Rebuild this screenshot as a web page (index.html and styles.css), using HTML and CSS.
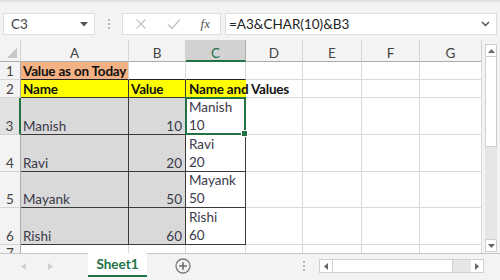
FILE: index.html
```html
<!DOCTYPE html>
<html>
<head>
<meta charset="utf-8">
<link rel="stylesheet" href="styles.css">
</head>
<body>
<div class="app">
  <div class="toolbar">
    <div class="namebox"><span>C3</span>
      <svg class="nb-arrow" width="8" height="5" viewBox="0 0 8 5"><polygon points="0,0 8,0 4,4.5" fill="#555"/></svg>
    </div>
    <div class="grip"><i></i><i></i><i></i></div>
    <div class="fxbox">
      <svg width="12" height="12" viewBox="0 0 12 12"><path d="M1.5 1.5 L10.5 10.5 M10.5 1.5 L1.5 10.5" stroke="#c4c4c4" stroke-width="1.3" fill="none"/></svg>
      <svg width="14" height="12" viewBox="0 0 14 12"><path d="M1 6.5 L5 10.5 L13 1.5" stroke="#c4c4c4" stroke-width="1.4" fill="none"/></svg>
      <span class="fx">fx</span>
    </div>
    <div class="formula"><span>=A3&amp;CHAR(10)&amp;B3</span>
      <svg width="9" height="6" viewBox="0 0 9 6"><path d="M1 1 L4.5 4.5 L8 1" stroke="#555" stroke-width="1.5" fill="none"/></svg>
    </div>
  </div>

  <div class="sheet">
    <div class="grid">
      <div class="corner"><svg width="10" height="10" viewBox="0 0 10 10"><polygon points="10,0 10,10 0,10" fill="#c6c6c6"/></svg></div>
      <div class="ch">A</div><div class="ch">B</div><div class="ch sel">C</div><div class="ch">D</div><div class="ch">E</div><div class="ch">F</div><div class="ch">G</div>

      <div class="rh">1</div>
      <div class="c orange b bb">Value as on Today</div><div class="c bb"></div><div class="c bb"></div><div class="c"></div><div class="c"></div><div class="c"></div><div class="c"></div>

      <div class="rh">2</div>
      <div class="c yellow b t">Name</div><div class="c yellow b t">Value</div><div class="c yellow b over">Name and Values</div><div class="c clear"></div><div class="c"></div><div class="c"></div><div class="c"></div>

      <div class="rh rsel">3</div>
      <div class="c gray t">Manish</div><div class="c gray t num">10</div><div class="c t wrap active"><span>Manish</span><span>10</span></div><div class="c"></div><div class="c"></div><div class="c"></div><div class="c"></div>

      <div class="rh">4</div>
      <div class="c gray t">Ravi</div><div class="c gray t num">20</div><div class="c t wrap"><span>Ravi</span><span>20</span></div><div class="c"></div><div class="c"></div><div class="c"></div><div class="c"></div>

      <div class="rh">5</div>
      <div class="c gray t">Mayank</div><div class="c gray t num">50</div><div class="c t wrap"><span>Mayank</span><span>50</span></div><div class="c"></div><div class="c"></div><div class="c"></div><div class="c"></div>

      <div class="rh">6</div>
      <div class="c gray t">Rishi</div><div class="c gray t num">60</div><div class="c t wrap"><span>Rishi</span><span>60</span></div><div class="c"></div><div class="c"></div><div class="c"></div><div class="c"></div>

      <div class="rh r7">7</div>
      <div class="c"></div><div class="c"></div><div class="c"></div><div class="c"></div><div class="c"></div><div class="c"></div><div class="c"></div>
    </div>
    <div class="vscroll">
      <div class="sbtn"><svg width="7" height="4" viewBox="0 0 7 4"><polygon points="0,4 7,4 3.5,0" fill="#666"/></svg></div>
      <div class="vthumb"></div>
      <div class="vtrack"></div>
      <div class="sbtn"><svg width="7" height="4" viewBox="0 0 7 4"><polygon points="0,0 7,0 3.5,4" fill="#666"/></svg></div>
    </div>
  </div>

  <div class="tabbar">
    <div class="nav">
      <svg width="5" height="7" viewBox="0 0 5 7"><polygon points="5,0 5,7 0,3.5" fill="#cfcfcf"/></svg>
      <svg width="5" height="7" viewBox="0 0 5 7"><polygon points="0,0 0,7 5,3.5" fill="#cfcfcf"/></svg>
    </div>
    <div class="tab">Sheet1</div>
    <div class="add">
      <svg width="16" height="16" viewBox="0 0 16 16"><circle cx="8" cy="8" r="7" stroke="#7a7a7a" stroke-width="1.3" fill="none"/><path d="M8 4.2 V11.8 M4.2 8 H11.8" stroke="#6a6a6a" stroke-width="1.6"/></svg>
    </div>
    <div class="spacer"></div>
    <div class="grip hgrip"><i></i><i></i><i></i></div>
    <div class="hscroll">
      <div class="hbtn"><svg width="4" height="7" viewBox="0 0 4 7"><polygon points="4,0 4,7 0,3.5" fill="#666"/></svg></div>
      <div class="hthumb"></div>
      <div class="htrack"></div>
      <div class="hbtn"><svg width="4" height="7" viewBox="0 0 4 7"><polygon points="0,0 0,7 4,3.5" fill="#666"/></svg></div>
    </div>
  </div>
</div>
</body>
</html>
```

FILE: styles.css
```css
html, body {
  margin: 0;
  padding: 0;
}
body {
  width: 500px;
  height: 280px;
  overflow: hidden;
  background: #f3f3f3;
  font-family: Lato, "Liberation Sans", sans-serif;
  color: #3a3a48;
}
.app {
  display: flex;
  flex-direction: column;
  width: 500px;
  height: 280px;
}

/* toolbar */
.toolbar {
  height: 40px;
  box-sizing: border-box;
  border-top: 2px solid #e2e2e2;
  padding: 11px 3px 0 3px;
  display: flex;
  align-items: flex-start;
  flex: none;
}
.namebox {
  width: 92px;
  height: 22px;
  box-sizing: border-box;
  background: #fff;
  border: 1px solid #dcdcdc;
  display: flex;
  align-items: center;
  justify-content: space-between;
  padding: 0 6px 0 7px;
  font-size: 13.5px;
  color: #444;
}
.grip {
  width: 27px;
  height: 22px;
  display: flex;
  flex-direction: column;
  align-items: center;
  justify-content: center;
  gap: 2px;
}
.grip i {
  display: block;
  width: 2px;
  height: 2px;
  background: #b5b5b5;
}
.fxbox {
  width: 99px;
  height: 22px;
  box-sizing: border-box;
  background: #fff;
  border: 1px solid #dcdcdc;
  display: flex;
  align-items: center;
  justify-content: space-between;
  padding: 0 10px 0 12px;
}
.fx {
  font-family: "Liberation Serif", serif;
  font-style: italic;
  font-size: 13px;
  color: #555;
}
.formula {
  flex: 1;
  margin-left: 4px;
  height: 22px;
  box-sizing: border-box;
  background: #fff;
  border: 1px solid #dcdcdc;
  display: flex;
  align-items: center;
  justify-content: space-between;
  padding: 0 6px 0 3px;
  font-size: 13.5px;
  color: #222;
}

/* sheet */
.sheet {
  flex: none;
  height: 213px;
  display: flex;
  align-items: flex-start;
}
.grid {
  width: 482px;
  height: 213px;
  overflow: hidden;
  display: grid;
  grid-template-columns: 21px 108px 57px 60px 57px 59px 58px 62px;
  grid-template-rows: 22px 18px 18px 37px 37px 36px 37px 18px;
  background: #fff;
  font-size: 13.5px;
}
.corner {
  background: #f3f3f3;
  border-right: 1px solid #d4d4d4;
  border-bottom: 1px solid #ababab;
  display: flex;
  align-items: flex-end;
  justify-content: flex-end;
  padding: 0 3px 3px 0;
  box-sizing: border-box;
}
.ch {
  background: #f3f3f3;
  border-right: 1px solid #d4d4d4;
  border-bottom: 1px solid #ababab;
  box-sizing: border-box;
  display: flex;
  align-items: center;
  justify-content: center;
  color: #444;
  padding-top: 4px;
}
.ch.sel {
  background: #d2d2d2;
  color: #217346;
  border-bottom: 2px solid #217346;
  border-right-color: #ababab;
  padding-top: 5px;
}
.rh {
  background: #f3f3f3;
  border-right: 1px solid #ababab;
  border-bottom: 1px solid #d4d4d4;
  box-sizing: border-box;
  display: flex;
  align-items: flex-end;
  justify-content: center;
  padding-bottom: 0;
  color: #444;
}
.rh.rsel {
  background: #e1e1e1;
  border-right: 2px solid #217346;
}
.rh.r7 {
  align-items: flex-start;
}
.c {
  border-right: 1px solid #d9d9d9;
  border-bottom: 1px solid #d9d9d9;
  box-sizing: border-box;
  display: flex;
  align-items: flex-end;
  padding: 0 3px 0 2px;
  line-height: 16px;
  white-space: nowrap;
  min-width: 0;
}
.c.b {
  font-weight: bold;
  color: #111;
  letter-spacing: -0.2px;
}
.orange { background: #f4b183; }
.yellow { background: #ffff00; }
.gray { background: #d9d9d9; }
.bb { border-bottom: 1px solid #222; }
.t {
  border-right: 1px solid #3a3a3a;
  border-bottom: 1px solid #3a3a3a;
}
.over {
  overflow: visible;
  border-right: none;
  border-bottom: 1px solid #3a3a3a;
  padding-left: 3px;
}
.clear {
  background: transparent;
  border-right-color: #d9d9d9;
}
.num {
  justify-content: flex-end;
}
.wrap {
  flex-direction: column;
  align-items: flex-start;
  justify-content: flex-end;
  line-height: 18px;
  padding-left: 3px;
}
.active {
  position: relative;
}
.active::before {
  content: "";
  position: absolute;
  left: -1px;
  top: -1px;
  right: -1px;
  bottom: -1px;
  border: 2px solid #217346;
}
.active::after {
  content: "";
  position: absolute;
  right: -3px;
  bottom: -3px;
  width: 5px;
  height: 5px;
  background: #217346;
  border: 1px solid #fff;
}

/* vertical scrollbar */
.vscroll {
  margin: 4px 0 0 3px;
  width: 12px;
  height: 208px;
  display: flex;
  flex-direction: column;
  background: #e6e6e6;
}
.sbtn {
  height: 13px;
  box-sizing: border-box;
  background: #fff;
  border: 1px solid #cfcfcf;
  display: flex;
  align-items: center;
  justify-content: center;
  flex: none;
}
.vthumb {
  height: 90px;
  background: #fff;
  border: 1px solid #cfcfcf;
  border-top: none;
  box-sizing: border-box;
  flex: none;
}
.vtrack {
  flex: 1;
}

/* tab bar */
.tabbar {
  flex: 1;
  display: flex;
  align-items: flex-start;
  border-top: 1px solid #c6c6c6;
  box-sizing: border-box;
}
.nav {
  width: 88px;
  height: 24px;
  display: flex;
  align-items: center;
  gap: 22px;
  padding-left: 21px;
  box-sizing: border-box;
}
.tab {
  width: 59px;
  height: 24px;
  margin-top: -1px;
  background: #fff;
  box-sizing: border-box;
  border-bottom: 2px solid #217346;
  color: #217346;
  font-weight: bold;
  font-size: 13.5px;
  display: flex;
  align-items: center;
  justify-content: center;
}
.add {
  width: 72px;
  height: 24px;
  display: flex;
  align-items: center;
  justify-content: center;
}
.spacer {
  flex: 1;
}
.hgrip {
  width: 30px;
  height: 24px;
}
.hscroll {
  width: 165px;
  height: 14px;
  margin: 5px 16px 0 0;
  display: flex;
  background: #e6e6e6;
  border: 1px solid #d0d0d0;
  box-sizing: border-box;
}
.hbtn {
  width: 12px;
  background: #fff;
  display: flex;
  align-items: center;
  justify-content: center;
  flex: none;
}
.hthumb {
  width: 121px;
  background: #fff;
  border-left: 1px solid #cfcfcf;
  border-right: 1px solid #cfcfcf;
  box-sizing: border-box;
  flex: none;
}
.htrack {
  flex: 1;
}
```
